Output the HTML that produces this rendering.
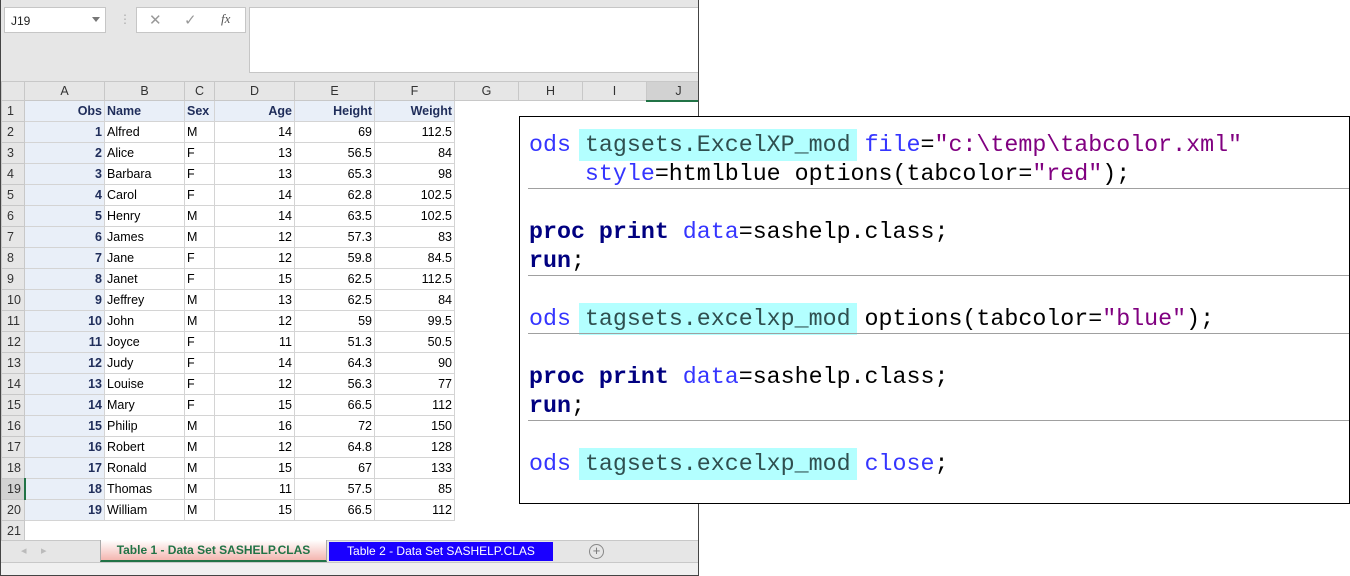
<!DOCTYPE html>
<html><head><meta charset="utf-8"><style>
*{margin:0;padding:0;box-sizing:border-box}
body{width:1350px;height:576px;background:#fff;position:relative;overflow:hidden;font-family:"Liberation Sans",Arial,sans-serif}
.xl{position:absolute;left:0;top:0;width:699px;height:576px;border:1px solid #444;border-top:none;background:#fff;overflow:hidden}
.top{position:absolute;left:0;top:0;width:699px;height:81px;background:#e6e6e6}
.nb{position:absolute;left:3px;top:7px;width:102px;height:26px;background:#fff;border:1px solid #c6c6c6;font-size:12px;padding:6px 6px;color:#222}
.fb{position:absolute;left:135px;top:7px;width:110px;height:26px;background:#fff;border:1px solid #c6c6c6}
.fi{position:absolute;left:248px;top:7px;width:460px;height:66px;background:#fff;border:1px solid #c6c6c6}
table{position:absolute;left:0;top:81px;width:709px;border-collapse:collapse;font-size:12.5px;table-layout:fixed}
td{height:21px;border:1px solid #d4d4d4;padding:0 2px;white-space:nowrap;overflow:hidden;color:#000}
tr td:nth-child(n+8){border:none}
tr.ch td{height:19px;background:#e6e6e6;text-align:center;color:#333;border:1px solid #c8c8c8}
td.rh{background:#e6e6e6;color:#333;text-align:left;padding-left:5px;border-color:#c8c8c8}
td.r{text-align:right}
td.o{background:#e9eff8;text-align:right;font-weight:bold;color:#1f2d5a}
tr.h td.d{background:#e9eff8;font-weight:bold;color:#1f2d5a}
.tabs{position:absolute;left:0;top:540px;width:699px;height:22px;background:#e6e6e6;border-top:1px solid #c8c8c8}
.st{position:absolute;left:0;top:562px;width:699px;height:14px;background:#f0f0f0;border-top:1px solid #c8c8c8}
.code{position:absolute;left:519px;top:116px;width:831px;height:388px;border:1px solid #000;background:#fff;font-family:"Liberation Mono","Courier New",monospace;font-size:23.3px}
.ln{position:absolute;left:9px;white-space:pre;line-height:28px;color:#000}
.sep{position:absolute;left:8px;right:0;height:1px;background:#a0a0a0}
.k{color:#3535ff}.s{color:#800080}.b{font-weight:bold;color:#000080}
.hl{background:#b3ffff;color:#2f4f4f;padding:3px 0;box-shadow:-6px 0 0 #b3ffff,6px 0 0 #b3ffff}
</style></head><body>
<div class="xl">
<div class="top">
<div class="nb">J19<span style="position:absolute;right:5px;top:9px;border:4px solid transparent;border-top:5px solid #777"></span></div>
<div style="position:absolute;left:118px;top:12px;color:#aaa;font-size:12px">⋮</div>
<div class="fb"><span style="position:absolute;left:12px;top:3px;color:#999;font-size:15px">✕</span><span style="position:absolute;left:47px;top:3px;color:#999;font-size:15px">✓</span><span style="position:absolute;left:84px;top:3px;color:#555;font-size:13px;font-style:italic;font-family:'Liberation Serif',serif">fx</span></div>
<div class="fi"></div>
</div>
<table>
<colgroup><col style="width:23px"><col style="width:80px"><col style="width:80px"><col style="width:30px"><col style="width:80px"><col style="width:80px"><col style="width:80px"><col style="width:64px"><col style="width:64px"><col style="width:64px"><col style="width:64px"></colgroup>
<tr class="ch"><td style="background:#e6e6e6"></td><td>A</td><td>B</td><td>C</td><td>D</td><td>E</td><td>F</td><td>G</td><td>H</td><td>I</td><td style="background:#d2d2d2;border-bottom:2px solid #217346">J</td></tr>
<tr class="h"><td class="rh">1</td><td class="o">Obs</td><td class="d">Name</td><td class="d">Sex</td><td class="d r">Age</td><td class="d r">Height</td><td class="d r">Weight</td><td></td><td></td><td></td><td></td></tr>
<tr><td class="rh">2</td><td class="o">1</td><td>Alfred</td><td>M</td><td class="r">14</td><td class="r">69</td><td class="r">112.5</td><td></td><td></td><td></td><td></td></tr>
<tr><td class="rh">3</td><td class="o">2</td><td>Alice</td><td>F</td><td class="r">13</td><td class="r">56.5</td><td class="r">84</td><td></td><td></td><td></td><td></td></tr>
<tr><td class="rh">4</td><td class="o">3</td><td>Barbara</td><td>F</td><td class="r">13</td><td class="r">65.3</td><td class="r">98</td><td></td><td></td><td></td><td></td></tr>
<tr><td class="rh">5</td><td class="o">4</td><td>Carol</td><td>F</td><td class="r">14</td><td class="r">62.8</td><td class="r">102.5</td><td></td><td></td><td></td><td></td></tr>
<tr><td class="rh">6</td><td class="o">5</td><td>Henry</td><td>M</td><td class="r">14</td><td class="r">63.5</td><td class="r">102.5</td><td></td><td></td><td></td><td></td></tr>
<tr><td class="rh">7</td><td class="o">6</td><td>James</td><td>M</td><td class="r">12</td><td class="r">57.3</td><td class="r">83</td><td></td><td></td><td></td><td></td></tr>
<tr><td class="rh">8</td><td class="o">7</td><td>Jane</td><td>F</td><td class="r">12</td><td class="r">59.8</td><td class="r">84.5</td><td></td><td></td><td></td><td></td></tr>
<tr><td class="rh">9</td><td class="o">8</td><td>Janet</td><td>F</td><td class="r">15</td><td class="r">62.5</td><td class="r">112.5</td><td></td><td></td><td></td><td></td></tr>
<tr><td class="rh">10</td><td class="o">9</td><td>Jeffrey</td><td>M</td><td class="r">13</td><td class="r">62.5</td><td class="r">84</td><td></td><td></td><td></td><td></td></tr>
<tr><td class="rh">11</td><td class="o">10</td><td>John</td><td>M</td><td class="r">12</td><td class="r">59</td><td class="r">99.5</td><td></td><td></td><td></td><td></td></tr>
<tr><td class="rh">12</td><td class="o">11</td><td>Joyce</td><td>F</td><td class="r">11</td><td class="r">51.3</td><td class="r">50.5</td><td></td><td></td><td></td><td></td></tr>
<tr><td class="rh">13</td><td class="o">12</td><td>Judy</td><td>F</td><td class="r">14</td><td class="r">64.3</td><td class="r">90</td><td></td><td></td><td></td><td></td></tr>
<tr><td class="rh">14</td><td class="o">13</td><td>Louise</td><td>F</td><td class="r">12</td><td class="r">56.3</td><td class="r">77</td><td></td><td></td><td></td><td></td></tr>
<tr><td class="rh">15</td><td class="o">14</td><td>Mary</td><td>F</td><td class="r">15</td><td class="r">66.5</td><td class="r">112</td><td></td><td></td><td></td><td></td></tr>
<tr><td class="rh">16</td><td class="o">15</td><td>Philip</td><td>M</td><td class="r">16</td><td class="r">72</td><td class="r">150</td><td></td><td></td><td></td><td></td></tr>
<tr><td class="rh">17</td><td class="o">16</td><td>Robert</td><td>M</td><td class="r">12</td><td class="r">64.8</td><td class="r">128</td><td></td><td></td><td></td><td></td></tr>
<tr><td class="rh">18</td><td class="o">17</td><td>Ronald</td><td>M</td><td class="r">15</td><td class="r">67</td><td class="r">133</td><td></td><td></td><td></td><td></td></tr>
<tr><td class="rh" style="background:#d2d2d2;border-right:2px solid #217346">19</td><td class="o">18</td><td>Thomas</td><td>M</td><td class="r">11</td><td class="r">57.5</td><td class="r">85</td><td></td><td></td><td></td><td></td></tr>
<tr><td class="rh">20</td><td class="o">19</td><td>William</td><td>M</td><td class="r">15</td><td class="r">66.5</td><td class="r">112</td><td></td><td></td><td></td><td></td></tr>
<tr><td class="rh">21</td><td style="border:none"></td><td style="border:none"></td><td style="border:none"></td><td style="border:none"></td><td style="border:none"></td><td style="border:none"></td><td></td><td></td><td></td><td></td></tr>
</table>
<div class="tabs">
<span style="position:absolute;left:20px;top:3px;color:#bbb;font-size:11px">◂</span><span style="position:absolute;left:40px;top:3px;color:#bbb;font-size:11px">▸</span>
<div style="position:absolute;left:99px;top:-1px;width:227px;height:22px;background:linear-gradient(#fff 0%,#f4b6b0 100%);border-bottom:2px solid #217346;border-left:1px solid #aaa;border-right:1px solid #aaa;color:#217346;font-weight:bold;font-size:12px;text-align:center;line-height:20px">Table 1 - Data Set SASHELP.CLAS</div>
<div style="position:absolute;left:328px;top:1px;width:224px;height:19px;background:#1a00ff;color:#fff;font-size:12px;text-align:center;line-height:19px">Table 2 - Data Set SASHELP.CLAS</div>
<div style="position:absolute;left:588px;top:3px;width:15px;height:15px;border:1px solid #888;border-radius:50%;color:#777;font-size:13px;line-height:12px;text-align:center">+</div>
</div>
<div class="st"></div>
</div>
<div class="code">
<div class="ln" style="top:14px"><span class="k">ods</span> <span class="hl">tagsets.ExcelXP_mod</span> <span class="k">file</span>=<span class="s">"c:\temp\tabcolor.xml"</span></div>
<div class="ln" style="top:43px">    <span class="k">style</span>=htmlblue options(tabcolor=<span class="s">"red"</span>);</div>
<div class="sep" style="top:71px"></div>
<div class="ln" style="top:101px"><span class="b">proc print</span> <span class="k">data</span>=sashelp.class;</div>
<div class="ln" style="top:130px"><span class="b">run</span>;</div>
<div class="sep" style="top:158px"></div>
<div class="ln" style="top:188px"><span class="k">ods</span> <span class="hl">tagsets.excelxp_mod</span> options(tabcolor=<span class="s">"blue"</span>);</div>
<div class="sep" style="top:216px"></div>
<div class="ln" style="top:246px"><span class="b">proc print</span> <span class="k">data</span>=sashelp.class;</div>
<div class="ln" style="top:275px"><span class="b">run</span>;</div>
<div class="sep" style="top:303px"></div>
<div class="ln" style="top:333px"><span class="k">ods</span> <span class="hl">tagsets.excelxp_mod</span> <span class="k">close</span>;</div>
</div>
</body></html>
